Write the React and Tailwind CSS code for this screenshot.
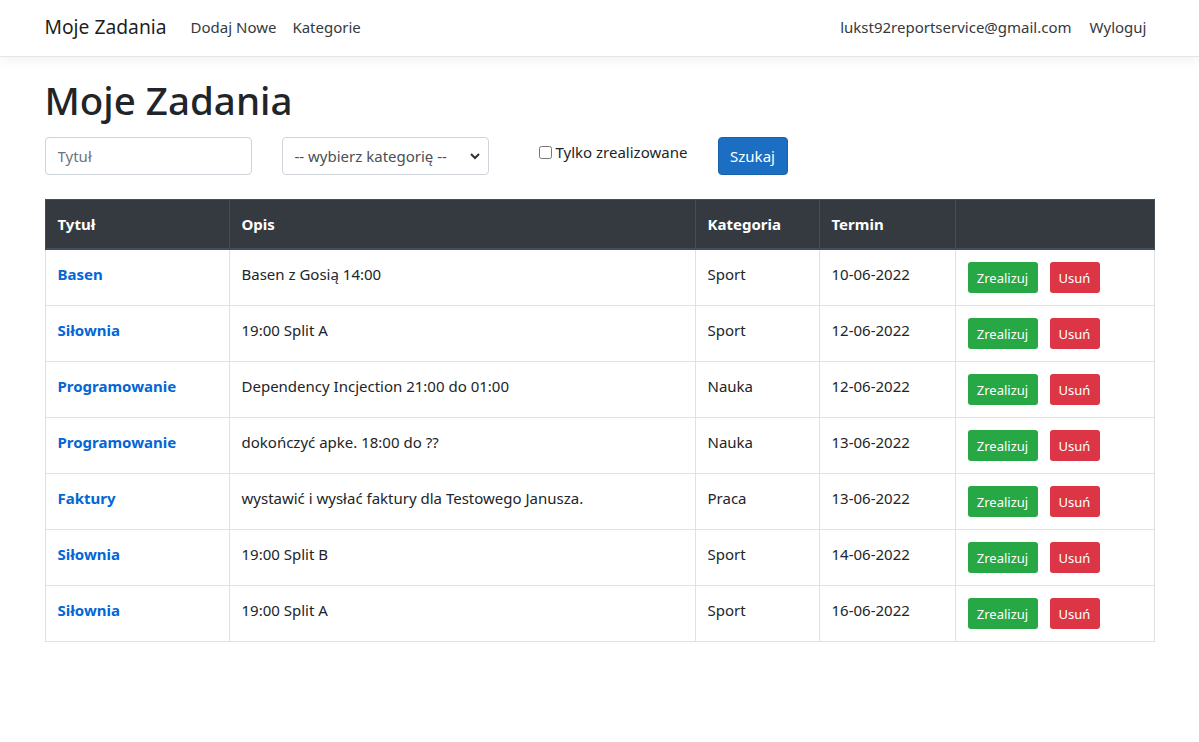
import React from 'react';

const tasks = [
  { title: 'Basen', desc: 'Basen z Gosią 14:00', cat: 'Sport', date: '10-06-2022' },
  { title: 'Siłownia', desc: '19:00 Split A', cat: 'Sport', date: '12-06-2022' },
  { title: 'Programowanie', desc: 'Dependency Incjection 21:00 do 01:00', cat: 'Nauka', date: '12-06-2022' },
  { title: 'Programowanie', desc: 'dokończyć apke. 18:00 do ??', cat: 'Nauka', date: '13-06-2022' },
  { title: 'Faktury', desc: 'wystawić i wysłać faktury dla Testowego Janusza.', cat: 'Praca', date: '13-06-2022' },
  { title: 'Siłownia', desc: '19:00 Split B', cat: 'Sport', date: '14-06-2022' },
  { title: 'Siłownia', desc: '19:00 Split A', cat: 'Sport', date: '16-06-2022' },
];

const td = 'border border-[#dee2e6] px-3 py-3 align-top';
const th = 'border border-[#454d55] px-3 py-3 text-left font-bold';

export default function App() {
  return (
    <div className="min-h-screen bg-white text-[15px] leading-6 text-[#212529]" style={{ fontFamily: '"Noto Sans", "Open Sans", sans-serif' }}>
      {/* Navbar */}
      <nav className="mb-[19px] border-b border-[#e5e5e5] bg-white pt-[7px] pb-[9px] shadow-[0_4px_12px_rgba(0,0,0,0.05)]">
        <div className="mx-auto flex w-[1140px] items-center px-[15px]">
          <a className="mr-4 py-[5px] text-[19.25px] leading-[30px] text-black/90" href="#">Moje Zadania</a>
          <a className="px-2 py-2 text-[#343a40]" href="#">Dodaj Nowe</a>
          <a className="px-2 py-2 text-[#343a40]" href="#">Kategorie</a>
          <div className="ml-auto flex items-center">
            <span className="px-2 py-2 text-[#343a40]">lukst92reportservice@gmail.com</span>
            <a className="ml-[2px] px-2 py-2 text-[#343a40]" href="#">Wyloguj</a>
          </div>
        </div>
      </nav>

      <main className="mx-auto w-[1140px] px-[15px]">
        <h1 className="mb-[13px] text-[38.5px] font-medium leading-[48px]">Moje Zadania</h1>

        {/* Filters */}
        <form className="mb-6 flex items-start">
          <input
            className="h-[38px] w-[207px] rounded border border-[#ced4da] px-3 text-[15px] text-[#495057] placeholder:text-[#6c757d]"
            placeholder="Tytuł"
          />
          <div className="relative ml-[30px]">
            <select className="h-[38px] w-[207px] appearance-none rounded border border-[#ced4da] bg-white pl-3 pr-8 text-[15px] text-[#495057]">
              <option>-- wybierz kategorię --</option>
            </select>
            <svg className="pointer-events-none absolute right-[9px] top-[15px]" width="10" height="8" viewBox="0 0 10 8">
              <path d="M1 2l4 4 4-4" fill="none" stroke="#333" strokeWidth="2" />
            </svg>
          </div>
          <label className="ml-[50px] mt-[3px] flex w-[179px] items-center gap-1 text-[#212529]">
            <input type="checkbox" className="h-[13px] w-[13px]" />
            <span>Tylko zrealizowane</span>
          </label>
          <button
            type="button"
            className="h-[38px] w-[70px] rounded border border-[#1861ac] bg-[#1b6ec2] text-white"
          >
            Szukaj
          </button>
        </form>

        {/* Table */}
        <table className="w-full border-collapse">
          <thead>
            <tr className="bg-[#343a40] text-white">
              <th className={`${th} w-[184px] border-b-2`}>Tytuł</th>
              <th className={`${th} w-[466px] border-b-2`}>Opis</th>
              <th className={`${th} w-[124px] border-b-2`}>Kategoria</th>
              <th className={`${th} w-[136px] border-b-2`}>Termin</th>
              <th className={`${th} border-b-2`}></th>
            </tr>
          </thead>
          <tbody>
            {tasks.map((t, i) => (
              <tr key={i}>
                <td className={td}>
                  <a href="#" className="font-bold text-[#0366d6]">{t.title}</a>
                </td>
                <td className={td}>{t.desc}</td>
                <td className={td}>{t.cat}</td>
                <td className={td}>{t.date}</td>
                <td className={td}>
                  <div className="flex gap-3">
                    <button className="h-[31px] w-[70px] rounded-[3px] bg-[#28a745] text-[13px] text-white">Zrealizuj</button>
                    <button className="h-[31px] w-[50px] rounded-[3px] bg-[#dc3545] text-[13px] text-white">Usuń</button>
                  </div>
                </td>
              </tr>
            ))}
          </tbody>
        </table>
      </main>
    </div>
  );
}
